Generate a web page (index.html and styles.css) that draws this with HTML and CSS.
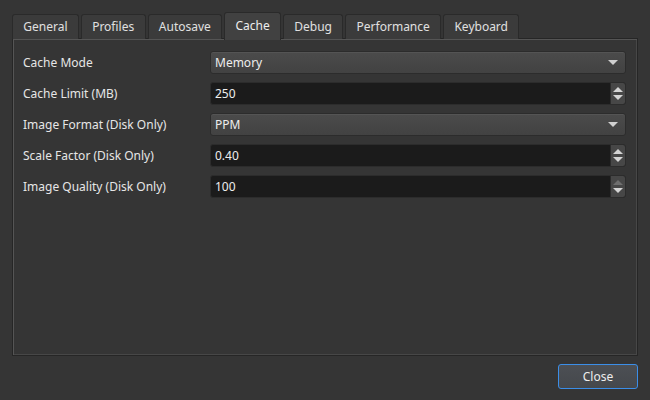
FILE: index.html
```html
<!DOCTYPE html>
<html>
<head>
<meta charset="utf-8">
<link rel="stylesheet" href="styles.css">
</head>
<body>
<div class="window">
  <div class="tabbar">
    <div class="tab">General</div>
    <div class="tab">Profiles</div>
    <div class="tab">Autosave</div>
    <div class="tab selected">Cache</div>
    <div class="tab">Debug</div>
    <div class="tab">Performance</div>
    <div class="tab">Keyboard</div>
  </div>
  <div class="panel">
    <div class="form">
      <div class="label">Cache Mode</div>
      <div class="combo"><span>Memory</span><span class="arrow"></span></div>
      <div class="label">Cache Limit (MB)</div>
      <div class="spin"><span class="val">250</span><span class="btns"><span class="up"></span><span class="down"></span></span></div>
      <div class="label">Image Format (Disk Only)</div>
      <div class="combo"><span>PPM</span><span class="arrow"></span></div>
      <div class="label">Scale Factor (Disk Only)</div>
      <div class="spin"><span class="val">0.40</span><span class="btns"><span class="up"></span><span class="down"></span></span></div>
      <div class="label">Image Quality (Disk Only)</div>
      <div class="spin"><span class="val">100</span><span class="btns"><span class="up dim"></span><span class="down"></span></span></div>
    </div>
  </div>
  <div class="footer">
    <button class="close">Close</button>
  </div>
</div>
</body>
</html>
```

FILE: styles.css
```css
html, body {
  margin: 0;
  padding: 0;
  background: #353535;
  font-family: "Noto Sans", "Open Sans", sans-serif;
  font-size: 12px;
  color: #e6e6e6;
}
.window {
  width: 650px;
  height: 400px;
  box-sizing: border-box;
  padding: 12px 12px 0 12px;
  display: flex;
  flex-direction: column;
}
.tabbar {
  display: flex;
  align-items: flex-end;
  gap: 2px;
  height: 27px;
  position: relative;
  z-index: 1;
}
.tab {
  height: 25px;
  box-sizing: border-box;
  padding: 0 10.3px;
  line-height: 24px;
  background: #3b3b3b;
  border: 1px solid #2a2a2a;
  border-bottom: none;
  border-radius: 3px 3px 0 0;
  color: #e0e0e0;
}
.tab.selected {
  height: 28px;
  margin-bottom: -1px;
  line-height: 25px;
  background: #414141;
  border-color: #2a2a2a;
  color: #eeeeee;
}
.panel {
  width: 626px;
  height: 318px;
  box-sizing: border-box;
  margin-top: -1px;
  border: 1px solid #262626;
  box-shadow: inset 1px 1px 0 #555555, inset -1px -1px 0 #474747;
  background: #353535;
  padding: 12px 11px 0 10px;
}
.form {
  display: grid;
  grid-template-columns: 187px 416px;
  grid-auto-rows: 23px;
  row-gap: 8px;
  align-items: center;
}
.label {
  color: #e6e6e6;
  line-height: 23px;
}
.combo {
  height: 23px;
  box-sizing: border-box;
  border: 1px solid #2c2c2c;
  border-radius: 3px;
  background: linear-gradient(#4b4b4b, #424242);
  box-shadow: inset 0 1px 0 #545454;
  display: flex;
  align-items: center;
  justify-content: space-between;
  padding: 0 7px 0 4px;
  color: #eeeeee;
}
.arrow {
  width: 0;
  height: 0;
  border-left: 5px solid transparent;
  border-right: 5px solid transparent;
  border-top: 5px solid #d0d0d0;
}
.spin {
  height: 23px;
  box-sizing: border-box;
  border: 1px solid #2c2c2c;
  border-radius: 3px;
  background: #1b1b1b;
  display: flex;
  align-items: stretch;
  color: #eeeeee;
  overflow: hidden;
}
.val {
  flex: 1;
  padding-left: 4px;
  line-height: 21px;
}
.btns {
  width: 14px;
  background: #474747;
  border-left: 1px solid #2c2c2c;
  display: flex;
  flex-direction: column;
  align-items: center;
  justify-content: center;
  gap: 3px;
}
.up {
  width: 0;
  height: 0;
  border-left: 5px solid transparent;
  border-right: 5px solid transparent;
  border-bottom: 5px solid #d4d4d4;
}
.up.dim {
  border-bottom-color: #6e6e6e;
}
.down {
  width: 0;
  height: 0;
  border-left: 5px solid transparent;
  border-right: 5px solid transparent;
  border-top: 5px solid #d4d4d4;
}
.footer {
  display: flex;
  justify-content: flex-end;
  padding-top: 8px;
}
.close {
  width: 80px;
  height: 25px;
  box-sizing: border-box;
  font-family: "Noto Sans", "Open Sans", sans-serif;
  font-size: 12px;
  color: #eeeeee;
  background: linear-gradient(#4c4f54, #45484c);
  border: 1px solid #3b8ee8;
  border-radius: 3px;
  padding: 0;
}
```
